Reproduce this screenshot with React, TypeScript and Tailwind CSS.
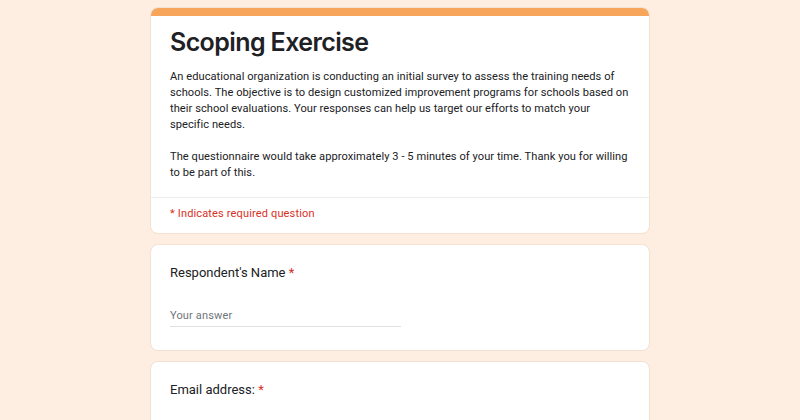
import React from "react";

export default function App() {
  return (
    <div className="min-h-[420px] w-full bg-[#fdeee1] pt-[7px]" style={{ fontFamily: "Roboto, 'Liberation Sans', sans-serif" }}>
      <div className="mx-auto flex w-[500px] flex-col gap-[10px]">
        <div className="overflow-hidden rounded-lg border border-[#f3e2d2] bg-white">
          <div className="h-[8px] bg-[#f6a55a]" />
          <div className="px-[19px] pt-[8px] pb-[16px]">
            <h1 className="text-[25px] font-semibold leading-[36px] tracking-[-0.6px] text-[#202124]" style={{ fontFamily: "Inter, 'Open Sans', sans-serif" }}>
              Scoping Exercise
            </h1>
            <div className="mt-[9px] w-[470px] text-[11.1px] leading-[16px] tracking-[0.05px] text-[#202124]">
              <p>
                An educational organization is conducting an initial survey to assess the training needs of
                <br />
                schools. The objective is to design customized improvement programs for schools based on
                <br />
                their school evaluations. Your responses can help us target our efforts to match your
                <br />
                specific needs.
              </p>
              <p className="mt-[16px]">
                The questionnaire would take approximately 3 - 5 minutes of your time. Thank you for willing
                <br />
                to be part of this.
              </p>
            </div>
          </div>
          <div className="border-t border-[#ececec] px-[19px] pt-[8px] pb-[11px] text-[11px] leading-[16px] tracking-[0.15px] text-[#d93025]">
            * Indicates required question
          </div>
        </div>

        <div className="h-[107px] rounded-lg border border-[#f3e2d2] bg-white px-[19px] pt-[18px]">
          <div className="text-[13px] leading-[20px] text-[#202124]">
            Respondent's Name <span className="text-[#d93025]">*</span>
          </div>
          <div className="mt-[25px] w-[231px] border-b border-[#e0e0e0] pb-[2px] text-[11px] leading-[16px] tracking-[0.15px] text-[#70757a]">
            Your answer
          </div>
        </div>

        <div className="h-[107px] rounded-lg border border-[#f3e2d2] bg-white px-[19px] pt-[18px]">
          <div className="text-[13px] leading-[20px] text-[#202124]">
            Email address: <span className="text-[#d93025]">*</span>
          </div>
        </div>
      </div>
    </div>
  );
}
